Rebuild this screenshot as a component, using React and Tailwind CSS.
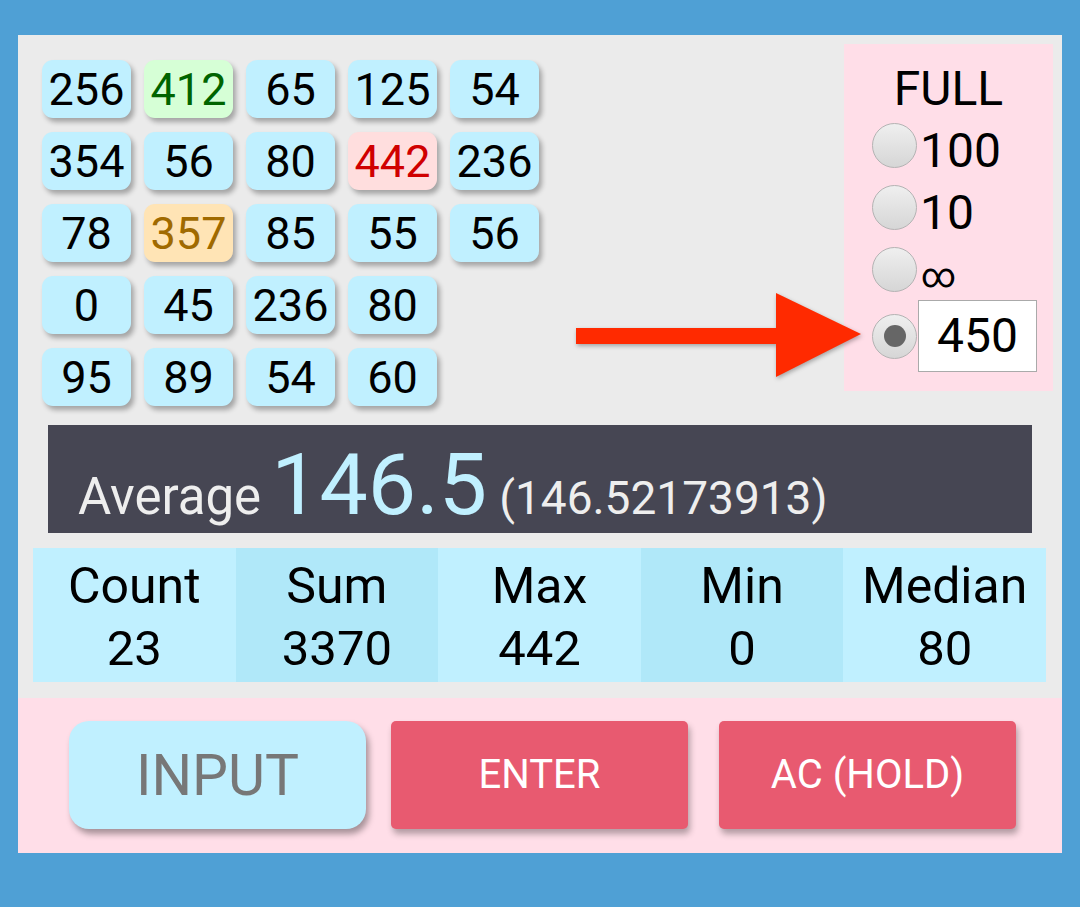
import React from "react";

const cells = [
  [["256"], ["412", "g"], ["65"], ["125"], ["54"]],
  [["354"], ["56"], ["80"], ["442", "r"], ["236"]],
  [["78"], ["357", "o"], ["85"], ["55"], ["56"]],
  [["0"], ["45"], ["236"], ["80"]],
  [["95"], ["89"], ["54"], ["60"]],
];

function Cell({ v, k }) {
  const cls =
    k === "g"
      ? "bg-[#d6ffd6] text-[#006400]"
      : k === "r"
      ? "bg-[#ffdede] text-[#d00000]"
      : k === "o"
      ? "bg-[#ffe4b5] text-[#a06a00]"
      : "bg-[#c0f0ff] text-black";
  return (
    <div
      className={`${cls} w-[89px] h-[58px] rounded-[11px] flex items-center justify-center text-[45px] leading-none shadow-[3px_4px_5px_rgba(0,0,0,0.3)]`}
    >
      {v}
    </div>
  );
}

function Radio({ on }) {
  return (
    <div className="w-[45px] h-[45px] rounded-full border border-[#b3b3b3] bg-gradient-to-b from-[#efefef] to-[#d6d6d6] flex items-center justify-center shrink-0">
      {on && <div className="w-[22px] h-[22px] rounded-full bg-[#666666]" />}
    </div>
  );
}

const stats = [
  ["Count", "23", "bg-[#c0f0ff]"],
  ["Sum", "3370", "bg-[#b0e8f9]"],
  ["Max", "442", "bg-[#c0f0ff]"],
  ["Min", "0", "bg-[#b0e8f9]"],
  ["Median", "80", "bg-[#c0f0ff]"],
];

export default function App() {
  return (
    <div
      className="w-[1080px] h-[907px] bg-[#4fa0d5] pt-[35px] pl-[18px] overflow-hidden"
      style={{ fontFamily: "Roboto, 'Noto Sans', sans-serif" }}
    >
      <div className="relative w-[1044px] h-[818px] bg-[#ebebeb] flex flex-col">
        {/* top section */}
        <div className="h-[390px] flex justify-between">
          <div className="pl-[24px] pt-[25px] flex flex-col gap-[14px]">
            {cells.map((row, i) => (
              <div key={i} className="flex gap-[13px]">
                {row.map(([v, k], j) => (
                  <Cell key={j} v={v} k={k} />
                ))}
              </div>
            ))}
          </div>
          <div className="mt-[9px] mr-[9px] w-[209px] h-[347px] bg-[#ffdee8] pt-[20px] pl-[28px] flex flex-col">
            <div className="h-[50px] flex items-center justify-center pr-[28px] text-[48px] leading-none text-black">
              FULL
            </div>
            {["100", "10"].map((t) => (
              <div key={t} className="h-[62px] flex items-center">
                <Radio />
                <span className="text-[48px] leading-none text-black ml-[3px] translate-y-[6px]">
                  {t}
                </span>
              </div>
            ))}
            <div className="h-[62px] flex items-center">
              <Radio />
              <span className="text-[34px] leading-none text-black ml-[4px] translate-y-[6px]">
                ∞
              </span>
            </div>
            <div className="h-[72px] flex items-center">
              <Radio on />
              <div className="ml-[1px] w-[119px] h-[72px] bg-white border border-[#aaaaaa] flex items-center justify-center text-[48px] leading-none text-black">
                450
              </div>
            </div>
          </div>
        </div>

        {/* dark bar */}
        <div className="mx-[30px] h-[108px] bg-[#464653] flex items-end pl-[30px] pb-[5px]">
          <div className="flex items-baseline leading-none">
            <span className="text-[51px] text-[#eeeeee]">Average</span>
            <span className="text-[86px] text-[#c0f0ff] ml-[10px]">146.5</span>
            <span className="text-[46px] text-[#eeeeee] ml-[12px]">(146.52173913)</span>
          </div>
        </div>

        {/* stats */}
        <div className="mt-[15px] ml-[15px] mr-[16px] h-[134px] flex">
          {stats.map(([l, v, bg]) => (
            <div key={l} className={`${bg} flex-1 pt-[8px] flex flex-col items-center gap-[2px] text-black`}>
              <div className="h-[60px] flex items-center text-[50px] leading-none">{l}</div>
              <div className="h-[60px] flex items-center text-[49px] leading-none">{v}</div>
            </div>
          ))}
        </div>

        {/* bottom buttons */}
        <div className="mt-[16px] h-[155px] bg-[#ffdee8] flex items-start pt-[23px] pl-[51px]">
          <div className="w-[297px] h-[108px] rounded-[20px] bg-[#c0f0ff] flex items-center justify-center text-[57px] leading-none text-[#777777] shadow-[3px_5px_6px_rgba(0,0,0,0.35)]">
            INPUT
          </div>
          <div className="ml-[25px] w-[297px] h-[108px] rounded-[5px] bg-[#e85a70] flex items-center justify-center text-[40px] leading-none text-white shadow-[2px_5px_6px_rgba(0,0,0,0.3)]">
            ENTER
          </div>
          <div className="ml-[31px] w-[297px] h-[108px] rounded-[5px] bg-[#e85a70] flex items-center justify-center text-[40px] leading-none text-white shadow-[2px_5px_6px_rgba(0,0,0,0.3)]">
            AC (HOLD)
          </div>
        </div>

        {/* annotation arrow */}
        <svg
          className="absolute left-[557px] top-[258px]"
          width="290"
          height="90"
          viewBox="0 0 290 90"
          style={{ filter: "drop-shadow(1px 2px 2px rgba(0,0,0,0.3))" }}
        >
          <rect x="1" y="35" width="202" height="16" fill="#ff2a00" />
          <polygon points="201,0 286,41 201,84" fill="#ff2a00" />
        </svg>
      </div>
    </div>
  );
}
